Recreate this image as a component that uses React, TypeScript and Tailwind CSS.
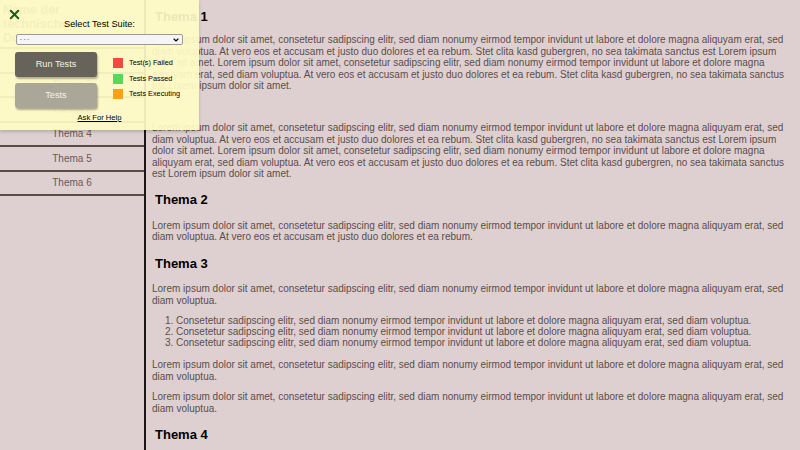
import { X, ChevronDown } from 'lucide-react';

const LOREM_LONG =
  'Lorem ipsum dolor sit amet, consetetur sadipscing elitr, sed diam nonumy eirmod tempor invidunt ut labore et dolore magna aliquyam erat, sed diam voluptua. At vero eos et accusam et justo duo dolores et ea rebum. Stet clita kasd gubergren, no sea takimata sanctus est Lorem ipsum dolor sit amet. Lorem ipsum dolor sit amet, consetetur sadipscing elitr, sed diam nonumy eirmod tempor invidunt ut labore et dolore magna aliquyam erat, sed diam voluptua. At vero eos et accusam et justo duo dolores et ea rebum. Stet clita kasd gubergren, no sea takimata sanctus est Lorem ipsum dolor sit amet.';

const LOREM_MID =
  'Lorem ipsum dolor sit amet, consetetur sadipscing elitr, sed diam nonumy eirmod tempor invidunt ut labore et dolore magna aliquyam erat, sed diam voluptua. At vero eos et accusam et justo duo dolores et ea rebum.';

const LOREM_SHORT =
  'Lorem ipsum dolor sit amet, consetetur sadipscing elitr, sed diam nonumy eirmod tempor invidunt ut labore et dolore magna aliquyam erat, sed diam voluptua.';

const LIST_ITEM =
  'Consetetur sadipscing elitr, sed diam nonumy eirmod tempor invidunt ut labore et dolore magna aliquyam erat, sed diam voluptua.';

const topics = ['Thema 1', 'Thema 2', 'Thema 3', 'Thema 4', 'Thema 5', 'Thema 6'];

function Sidebar() {
  return (
    <aside className="w-[146px] shrink-0 h-full border-r-2 border-[#1c1616]">
      {/* Doc title */}
      <div className="h-[49px] border-b-2 border-[#5a4b4b] px-[3px] pt-[3px] text-[12.5px] leading-[14px] font-bold text-[#6e5e5e]">
        <div>Name der</div>
        <div>technischen</div>
        <div>Doku</div>
      </div>
      <nav>
        {topics.map((topic) => (
          <div
            key={topic}
            className="h-[24.5px] border-b-2 border-[#5a4b4b] flex items-center justify-center text-[10px] text-[#6a5858]"
          >
            {topic}
          </div>
        ))}
      </nav>
    </aside>
  );
}

function Content() {
  const p = 'text-[10px] leading-[11.5px] text-[#5c4d4d]';
  const h = 'text-[13px] leading-[15px] font-bold text-black pl-[3px]';
  return (
    <main className="flex-1 h-full overflow-hidden pl-[6px] pr-[8px]">
      <h3 className={`${h} mt-[8.5px]`}>Thema 1</h3>
      <p className={`${p} mt-[10.5px]`}>{LOREM_LONG}</p>
      <p className={`${p} mt-[30.5px]`}>{LOREM_LONG}</p>

      <h3 className={`${h} mt-[12.5px]`}>Thema 2</h3>
      <p className={`${p} mt-[12.5px]`}>{LOREM_MID}</p>

      <h3 className={`${h} mt-[13px]`}>Thema 3</h3>
      <p className={`${p} mt-[12.5px]`}>{LOREM_SHORT}</p>
      <ol className="list-decimal pl-[24px] mt-[9px] text-[10px] leading-[11px] text-[#5c4d4d]">
        <li>{LIST_ITEM}</li>
        <li>{LIST_ITEM}</li>
        <li>{LIST_ITEM}</li>
      </ol>
      <p className={`${p} mt-[11px]`}>{LOREM_SHORT}</p>
      <p className={`${p} mt-[9px]`}>{LOREM_SHORT}</p>

      <h3 className={`${h} mt-[13px]`}>Thema 4</h3>
    </main>
  );
}

function TestPanel() {
  return (
    <div className="absolute left-0 top-0 w-[199px] h-[130px] bg-[#fffcc6]/[0.92] shadow-[0_2px_3px_rgba(0,0,0,0.18)] flex flex-col">
      {/* close */}
      <button className="absolute left-[7px] top-[7px] text-[#1d5a1d]">
        <X className="w-[15px] h-[15px]" strokeWidth={3.2} />
      </button>

      <div className="pt-[19px] text-center text-[9.2px] leading-[10.5px] text-black">Select Test Suite:</div>

      <div className="relative mx-[16px] mt-[4.5px] h-[11px]">
        <select className="block appearance-none w-full h-[11px] p-0 pl-[3px] border border-[#9a9a9a] rounded-[2px] bg-[#f5f5f5] text-[6px] leading-[9px] text-[#333] outline-none">
          <option>- - -</option>
        </select>
        <ChevronDown className="absolute right-[3px] top-[1.5px] w-[8px] h-[8px] text-black pointer-events-none" strokeWidth={3.5} />
      </div>

      <div className="flex mt-[7px] pl-[15px]">
        <div className="flex flex-col gap-[6px] w-[82px]">
          <button className="h-[25px] rounded-[3px] bg-[#67635a] text-[9.2px] text-[#f2f1e6] shadow-[1px_2px_2px_rgba(0,0,0,0.3)]">
            Run Tests
          </button>
          <button className="h-[25px] rounded-[3px] bg-[#aaa798] text-[9.2px] text-[#f4f3ea] shadow-[1px_2px_2px_rgba(0,0,0,0.3)]">
            Tests
          </button>
        </div>

        <div className="flex flex-col gap-[5.5px] ml-[16px] pt-[6px] text-[7.3px] leading-[10px] text-black">
          <div className="flex items-center gap-[6px]">
            <span className="w-[10px] h-[10px] bg-[#f24a3f]" />
            <span>Test(s) Failed</span>
          </div>
          <div className="flex items-center gap-[6px]">
            <span className="w-[10px] h-[10px] bg-[#5bd65b]" />
            <span>Tests Passed</span>
          </div>
          <div className="flex items-center gap-[6px]">
            <span className="w-[10px] h-[10px] bg-[#f4a11e]" />
            <span>Tests Executing</span>
          </div>
        </div>
      </div>

      <div className="mt-[5px] text-center text-[7.6px] leading-[9px] text-black underline">Ask For Help</div>
    </div>
  );
}

export default function App() {
  return (
    <div className="relative flex w-[800px] h-[450px] overflow-hidden bg-[#ded0d0] font-['Liberation_Sans',Arial,sans-serif]">
      <Sidebar />
      <Content />
      <TestPanel />
    </div>
  );
}
